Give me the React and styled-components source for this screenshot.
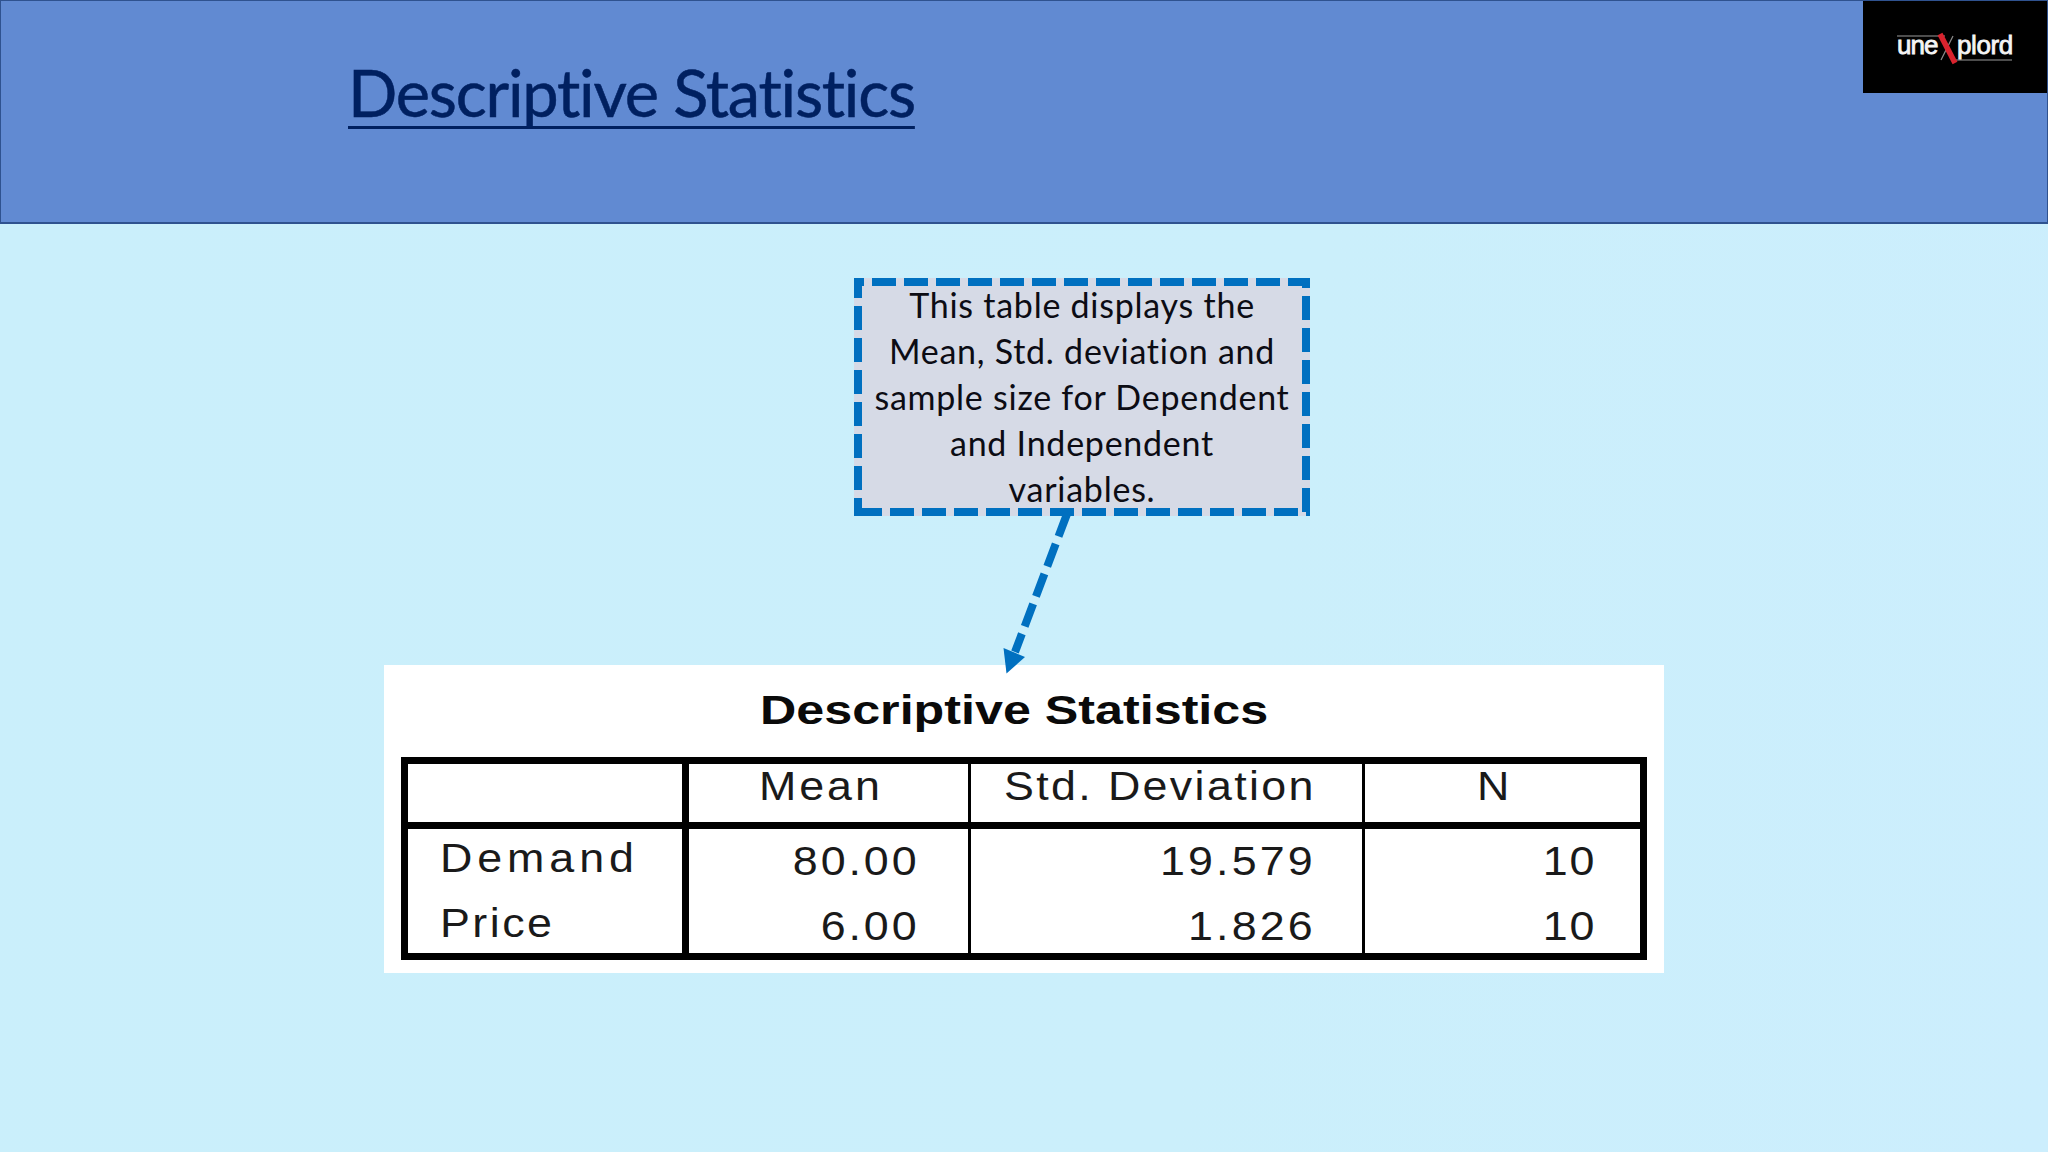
import React from 'react';
import styled, { createGlobalStyle } from 'styled-components';

const Global = createGlobalStyle`
  html, body {
    margin: 0;
    padding: 0;
    background: #caeffb;
  }
`
const Page = styled.div`
  width: 2048px;
  height: 1152px;
  overflow: hidden;
  display: flex;
  flex-direction: column;
  font-family: "Lato", "Liberation Sans", sans-serif;
`
const Header = styled.header`
  position: relative;
  box-sizing: border-box;
  height: 224px;
  flex: none;
  padding: 45px 0 0 347px;
  background: #618ad2;
  border: 1px solid #2f528f;
  border-bottom-width: 2px;
`
const Title = styled.h1`
  margin: 0;
  font-size: 65px;
  line-height: 92px;
  font-weight: 400;
  color: #002060;
  letter-spacing: -1.25px;
  -webkit-text-stroke: 0.5px #002060;
  text-decoration: underline;
  text-decoration-thickness: 3px;
  text-underline-offset: 9px;
  text-decoration-skip-ink: none;
`
const LogoBox = styled.div`
  position: absolute;
  top: 0;
  right: 0;
  width: 184px;
  height: 92px;
  background: #000;
`
const Main = styled.main`
  position: relative;
  flex: 1;
  display: flex;
  flex-direction: column;
  padding-top: 54px;
  background: linear-gradient(100deg, #caeffb 0%, #cbeffb 60%, #cceefd 100%);
`
const Callout = styled.div`
  --dash: #0070c0;
  box-sizing: border-box;
  width: 456px;
  height: 238px;
  margin-left: 854px;
  padding-top: 4px;
  text-align: center;
  font-size: 34px;
  line-height: 46px;
  letter-spacing: 0.75px;
  color: #0c0c14;
  background-color: #d6dae6;
  background-image:
    linear-gradient(to right, var(--dash) 24px, transparent 24px),
    linear-gradient(to right, var(--dash) 24px, transparent 24px),
    linear-gradient(to bottom, var(--dash) 24px, transparent 24px),
    linear-gradient(to bottom, var(--dash) 24px, transparent 24px);
  background-size: 32px 8px, 32px 8px, 8px 32px, 8px 32px;
  background-position: 18px 0, 4px 100%, 0 28px, 100% 18px;
  background-repeat: repeat-x, repeat-x, repeat-y, repeat-y;
`
const Arrow = styled.svg`
  position: absolute;
  left: 1000px;
  top: 286px;
  z-index: 1;
`
const Panel = styled.section`
  box-sizing: border-box;
  width: 1280px;
  height: 308px;
  margin: 149px 0 0 384px;
  padding: 24px 17px 0 17px;
  background: #fff;
  font-family: "Liberation Sans", Arial, sans-serif;
  color: #1a1a1a;
`
const TableTitle = styled.h2`
  width: fit-content;
  margin: 0 0 26px 359px;
  font-size: 40px;
  line-height: 42px;
  font-weight: 700;
  color: #0a0a0a;
  white-space: nowrap;
  transform: scaleX(1.256);
  transform-origin: left center;
`
const Table = styled.div`
  box-sizing: border-box;
  height: 203px;
  display: grid;
  grid-template-columns: 281px 281.5px 394.5px 1fr;
  grid-template-rows: 65px 124px;
  border: 7px solid #000;
`
const Cell = styled.div`
  box-sizing: border-box;
  display: flex;
  flex-direction: column;
  gap: 7px;
  border-right: ${p => p.$rule || 0}px solid #000;
  border-bottom: ${p => (p.$head ? 7 : 0)}px solid #000;
  padding: ${p => p.$pad || '0'};
  text-align: ${p => p.$align || 'left'};
  font-size: 40px;
  line-height: ${p => (p.$head ? 44 : 58)}px;
`
const Text = styled.span`
  letter-spacing: ${p => p.$track}px;
  white-space: nowrap;
  transform: scaleX(1.12);
  transform-origin: ${p => p.$origin || 'left'} center;
`

const rows = [
  { name: 'Demand', nameTrack: 4.4, mean: '80.00', sd: '19.579', n: '10' },
  { name: 'Price', nameTrack: 2.2, mean: '6.00', sd: '1.826', n: '10' },
];

const Logo = () => (
  <svg width="184" height="92" viewBox="0 0 184 92">
    <path d="M34 35H82M92 59H149" stroke="#9a9a9a" strokeWidth="1.2" fill="none" />
    <path d="M78 59L90 35" stroke="#8a8a8a" strokeWidth="1.2" fill="none" />
    <text x="34" y="53" fill="#f4f4f4" stroke="#f4f4f4" strokeWidth="0.8" fontFamily="Liberation Sans, sans-serif" fontSize="26" letterSpacing="-1">une</text>
    <path d="M77 33L92 62" stroke="#d9232e" strokeWidth="5.5" fill="none" />
    <text x="94" y="53" fill="#f4f4f4" stroke="#f4f4f4" strokeWidth="0.8" fontFamily="Liberation Sans, sans-serif" fontSize="26" letterSpacing="-0.4">plord</text>
  </svg>
);

const App = () => {
  return (
    <Page>
      <Global />
      <Header>
        <Title>Descriptive Statistics</Title>
        <LogoBox><Logo /></LogoBox>
      </Header>
      <Main>
        <Callout>
          This table displays the<br />
          Mean, Std. deviation and<br />
          sample size for Dependent<br />
          and Independent<br />
          variables.
        </Callout>
        <Arrow width="80" height="170" viewBox="1000 510 80 170">
          <path d="M1067 514L1015 652" stroke="#0070c0" strokeWidth="8" strokeDasharray="24 8" fill="none" />
          <path d="M1003.5 648L1025 657L1006.5 673.5Z" fill="#0070c0" />
        </Arrow>
        <Panel>
          <TableTitle>Descriptive Statistics</TableTitle>
          <Table>
            <Cell $head $rule={7} />
            <Cell $head $rule={3.5} $pad="0 0 0 70px"><Text $track={2.6}>Mean</Text></Cell>
            <Cell $head $rule={3.5} $pad="0 0 0 33px"><Text $track={2.1}>Std. Deviation</Text></Cell>
            <Cell $head $pad="0 0 0 112px"><Text $track={0}>N</Text></Cell>
            <Cell $rule={7} $pad="0 0 0 32px">
              {rows.map(r => <Text key={r.name} $track={r.nameTrack}>{r.name}</Text>)}
            </Cell>
            <Cell $rule={3.5} $align="right" $pad="3px 48px 0 0">
              {rows.map(r => <Text key={r.name} $origin="right" $track={2.6}>{r.mean}</Text>)}
            </Cell>
            <Cell $rule={3.5} $align="right" $pad="3px 46.7px 0 0">
              {rows.map(r => <Text key={r.name} $origin="right" $track={2.8}>{r.sd}</Text>)}
            </Cell>
            <Cell $align="right" $pad="3px 44px 0 0">
              {rows.map(r => <Text key={r.name} $origin="right" $track={1.5}>{r.n}</Text>)}
            </Cell>
          </Table>
        </Panel>
      </Main>
    </Page>
  );
};

export default App;
